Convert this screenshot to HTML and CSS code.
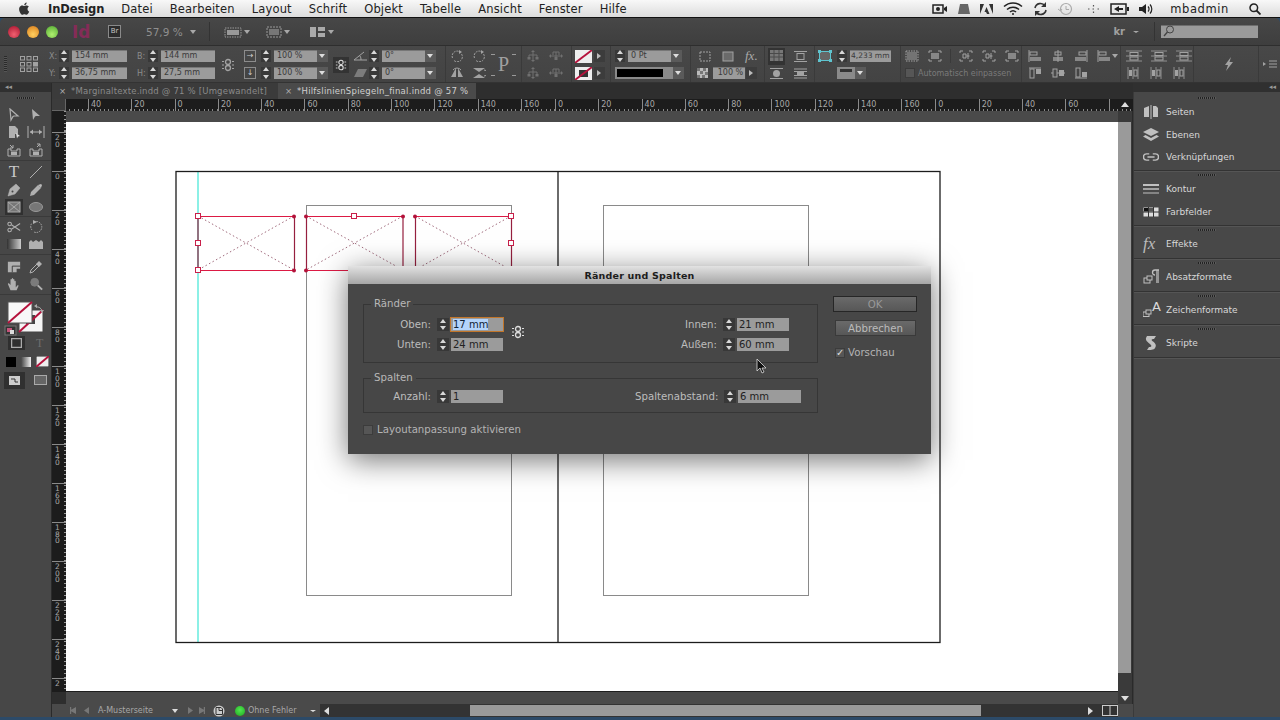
FILE: index.html
```html
<!DOCTYPE html>
<html lang="de">
<head>
    <meta charset="UTF-8">
    <title>InDesign - Ränder und Spalten</title>
    <link rel="stylesheet" href="styles.css">
</head>
<body>

<!-- icon set -->
<svg class="sprite" xmlns="http://www.w3.org/2000/svg">
    <symbol id="apple" viewBox="0 0 16 16"><path fill="currentColor" d="M11.2 8.5c0-1.6 1.3-2.3 1.4-2.4-.8-1.1-2-1.3-2.4-1.3-1-.1-2 .6-2.5.6s-1.3-.6-2.2-.6c-1.1 0-2.1.7-2.7 1.6-1.2 2-.3 5 .8 6.6.6.8 1.2 1.7 2.1 1.7.8 0 1.2-.5 2.2-.5s1.3.5 2.2.5 1.5-.8 2-1.6c.6-.9.9-1.8.9-1.9 0 0-1.8-.7-1.8-2.7zM9.6 3.6c.4-.5.8-1.3.7-2-.7 0-1.5.4-1.9 1-.4.5-.8 1.2-.7 1.9.7 0 1.4-.4 1.9-.9z"/></symbol>
    <symbol id="chain" viewBox="0 0 14 14"><rect x="4.5" y="1.5" width="5" height="5" rx="2.4" fill="none" stroke="currentColor" stroke-width="1.3"/><rect x="4.5" y="7.5" width="5" height="5" rx="2.4" fill="none" stroke="currentColor" stroke-width="1.3"/><path d="M1 3.5h2M1 7h2M1 10.5h2M11 3.5h2M11 7h2M11 10.5h2" stroke="currentColor"/></symbol>
    <symbol id="frame-pick" viewBox="0 0 14 12"><rect x="2" y="2" width="10" height="8" fill="currentColor" opacity=".5"/><path d="M1 1h12v10H1z" fill="none" stroke="currentColor" stroke-dasharray="1.5 1"/></symbol>
    <symbol id="frame-fit" viewBox="0 0 14 12"><rect x="3" y="3" width="8" height="6" fill="currentColor" opacity=".7"/><path d="M1 3V1h3M10 1h3v2M13 9v2h-3M4 11H1V9" fill="none" stroke="currentColor"/></symbol>
    <symbol id="frame-plus" viewBox="0 0 14 12"><path d="M1 3V1h3M10 1h3v2M13 9v2h-3M4 11H1V9" fill="none" stroke="currentColor"/><path d="M4 4h3v4H4zM9 3v6M7.5 6h3" fill="none" stroke="currentColor"/></symbol>
    <symbol id="tree" viewBox="0 0 14 12"><path d="M7 0l2 2H5zM7 12l2-2H5z" fill="currentColor"/><path d="M7 2v8M3 5h8M3 5v3M11 5v3" stroke="currentColor" fill="none"/><rect x="1.5" y="7" width="3" height="2.5" fill="currentColor"/><rect x="9.5" y="7" width="3" height="2.5" fill="currentColor"/></symbol>
    <symbol id="tree-side" viewBox="0 0 16 12"><path d="M1 6l2-2v4zM15 6l-2-2v4z" fill="currentColor"/><path d="M3 6h10M8 2v8M5 2h6M5 2v3M11 2v3" stroke="currentColor" fill="none"/><rect x="6.5" y="7" width="3" height="3" fill="currentColor"/></symbol>
    <symbol id="rot-a" viewBox="0 0 14 12"><path d="M2.5 8A5 5 0 0 1 10 2" fill="none" stroke="currentColor" stroke-dasharray="2 1"/><path d="M11.5 4A5 5 0 0 1 4 10.5" fill="none" stroke="currentColor" stroke-dasharray="2 1"/><path d="M9 0l3 2-3 2z" fill="currentColor"/></symbol>
    <symbol id="flip-h" viewBox="0 0 14 12"><path d="M6 1L1 10h5zM8 1l5 9H8z" fill="currentColor"/><path d="M3 3a5 5 0 0 1 8 0" fill="none" stroke="currentColor"/></symbol>
    <symbol id="flip-v" viewBox="0 0 14 12"><path d="M1 1h12L7 5zM1 11h12L7 7z" fill="currentColor"/><path d="M12 3a4 3 0 0 1 0 6" fill="none" stroke="currentColor"/></symbol>
    <symbol id="align-a" viewBox="0 0 14 12"><path d="M1 0v12" stroke="currentColor"/><rect x="2" y="2" width="7" height="3" fill="none" stroke="currentColor"/><rect x="2" y="7" width="11" height="4" fill="currentColor" opacity=".7"/></symbol>
    <symbol id="align-b" viewBox="0 0 14 12"><path d="M7 0v12" stroke="currentColor"/><rect x="4" y="2" width="6" height="3" fill="none" stroke="currentColor"/><rect x="2" y="7" width="10" height="4" fill="currentColor" opacity=".7"/></symbol>
    <symbol id="align-c" viewBox="0 0 14 12"><path d="M13 0v12" stroke="currentColor"/><rect x="5" y="2" width="7" height="3" fill="none" stroke="currentColor"/><rect x="1" y="7" width="11" height="4" fill="currentColor" opacity=".7"/></symbol>
    <symbol id="align-d" viewBox="0 0 14 12"><path d="M1 1h12" stroke="currentColor"/><rect x="2" y="2" width="4" height="9" fill="none" stroke="currentColor"/><rect x="8" y="2" width="5" height="5" fill="currentColor"/></symbol>
    <symbol id="align-e" viewBox="0 0 14 12"><path d="M0 6h14" stroke="currentColor"/><rect x="2" y="2" width="4" height="8" fill="#4a4a4a" stroke="currentColor"/><rect x="8" y="3" width="5" height="6" fill="currentColor"/></symbol>
    <symbol id="align-f" viewBox="0 0 14 12"><path d="M1 11h12" stroke="currentColor"/><rect x="2" y="1" width="4" height="9" fill="none" stroke="currentColor"/><rect x="8" y="5" width="5" height="5" fill="currentColor"/></symbol>
    <symbol id="dist-a" viewBox="0 0 16 12"><path d="M0 1h16M0 6h16M0 11h16" stroke="currentColor" stroke-width=".8"/><rect x="4" y="2.5" width="8" height="3" fill="none" stroke="currentColor"/><rect x="4" y="7" width="8" height="3" fill="none" stroke="currentColor"/></symbol>
    <symbol id="dist-b" viewBox="0 0 14 12"><path d="M2 0v12M7 0v12M12 0v12" stroke="currentColor" stroke-width=".8"/><rect x="3" y="3" width="3" height="6" fill="currentColor"/><rect x="8" y="3" width="3" height="6" fill="none" stroke="currentColor"/></symbol>
    <symbol id="select" viewBox="0 0 14 14"><path d="M3 1l8 7H7l-1 .5L4 12z" fill="none" stroke="currentColor" stroke-width="1.2"/></symbol>
    <symbol id="direct" viewBox="0 0 14 14"><path d="M3 1l8 7H7l-1 .5L4 12z" fill="currentColor"/></symbol>
    <symbol id="page-tool" viewBox="0 0 14 14"><path d="M2 1h6l3 3v5H8v4H2z" fill="currentColor"/><path d="M9 8l4 3-2 .5-1 2z" fill="#ddd"/></symbol>
    <symbol id="gap" viewBox="0 0 18 14"><path d="M1 1v12M17 1v12M3 7h12" stroke="currentColor" fill="none"/><path d="M3 7l3-2.500v5zM15 7l-3-2.500v5z" fill="currentColor"/></symbol>
    <symbol id="collect" viewBox="0 0 14 14"><path d="M1 6v7h12V6H10v2H4V6z" fill="none" stroke="currentColor"/><rect x="4" y="9" width="6" height="3" fill="currentColor"/><path d="M3 2l3 3M6 2v3H3" fill="none" stroke="currentColor"/></symbol>
    <symbol id="place" viewBox="0 0 14 14"><path d="M1 6v7h12V6H10v2H4V6z" fill="none" stroke="currentColor"/><rect x="4" y="9" width="6" height="3" fill="currentColor"/><path d="M11 1L8 4M8 1h3v3" fill="none" stroke="currentColor"/></symbol>
    <symbol id="pen" viewBox="0 0 14 14"><path d="M1 13l2-7 6-5 4 4-5 6zM1 13l4-4" fill="currentColor" stroke="currentColor" stroke-width=".5"/><circle cx="5.5" cy="8.5" r="1" fill="#444"/></symbol>
    <symbol id="pencil" viewBox="0 0 14 14"><path d="M1 13l1-4 7-7 3 3-7 7z" fill="currentColor"/><path d="M9 2l3-1 1 1-1 3z" fill="#b9b9b9"/></symbol>
    <symbol id="scissors" viewBox="0 0 16 14"><circle cx="3" cy="3.500" r="2" fill="none" stroke="currentColor" stroke-width="1.200"/><circle cx="3" cy="10.500" r="2" fill="none" stroke="currentColor" stroke-width="1.200"/><path d="M5 4.500L15 11M5 9.500L15 3" stroke="currentColor" stroke-width="1.200"/></symbol>
    <symbol id="free" viewBox="0 0 14 14"><path d="M3 10a5.500 5.500 0 0 1 0-7" fill="none" stroke="currentColor" stroke-dasharray="1.500 1"/><path d="M5 2a5.500 5.500 0 1 1 0 10" fill="none" stroke="currentColor" stroke-dasharray="1.500 1"/><path d="M4 0l4 2-4 2z" fill="currentColor"/></symbol>
    <symbol id="eyedrop" viewBox="0 0 14 14"><path d="M1 13l1-3 6-6 2 2-6 6z" fill="none" stroke="currentColor"/><path d="M7 4l3-3 3 3-3 3z" fill="currentColor"/></symbol>
    <symbol id="hand" viewBox="0 0 16 16"><path d="M4 15L1 8c0-1 1-1 1.500-.5L4 9V3c0-1 1.500-1 1.500 0v4-5c0-1 1.500-1 1.500 0v5-4c0-1 1.500-1 1.500 0v5-3c0-1 1.500-1 1.500 0v7l1.500-2c1-1 2-.5 1.500.5L11 15z" fill="currentColor"/></symbol>
    <symbol id="zoom" viewBox="0 0 16 16"><circle cx="6.500" cy="6" r="4.500" fill="currentColor" opacity=".5" stroke="currentColor"/><path d="M10 9.500l5 5" stroke="currentColor" stroke-width="2.200"/></symbol>
    <symbol id="note-tool" viewBox="0 0 16 14"><path d="M1 1h14v8h-4v4H1z" fill="currentColor"/><path d="M6 6h9M6 6v7" stroke="#333"/></symbol>
    <symbol id="layers" viewBox="0 0 16 14"><path d="M8 0l8 4-8 4-8-4z" fill="currentColor"/><path d="M2.500 7L0 8.500l8 4.500 8-4.500L13.500 7 8 10z" fill="currentColor"/></symbol>
    <symbol id="pages" viewBox="0 0 16 14"><path d="M8 0v14" stroke="currentColor"/><path d="M1 3l5-2v11H1zM10 1h3l2 2v9h-5z" fill="currentColor"/></symbol>
    <symbol id="links" viewBox="0 0 18 10"><path d="M7 1.500H4a3.500 3.500 0 0 0 0 7h3M11 1.500h3a3.500 3.500 0 0 1 0 7h-3M5 5h8" fill="none" stroke="currentColor" stroke-width="1.600"/></symbol>
    <symbol id="stroke" viewBox="0 0 16 10"><path d="M0 1h16" stroke="currentColor" stroke-width="2"/><path d="M0 5h16" stroke="currentColor" stroke-width="1.500"/><path d="M0 9h16" stroke="currentColor"/></symbol>
    <symbol id="swatches" viewBox="0 0 16 10"><rect x=".5" y=".5" width="15" height="9" fill="#ddd"/><rect x="1" y="1" width="4" height="3.500" fill="#111"/><rect x="6" y="1" width="4" height="3.500" fill="#555"/><path d="M5.500 0v10M10.500 0v10M0 5h16" stroke="#333"/></symbol>
    <symbol id="pstyle" viewBox="0 0 16 16"><rect x="1" y="9" width="6" height="5" fill="none" stroke="currentColor"/><rect x="4" y="7" width="5" height="4" fill="#484848" stroke="currentColor"/><path d="M12 1h4v13M14 1v13M12 1a2.500 2.500 0 0 0 0 5" fill="none" stroke="currentColor" stroke-width="1.300"/></symbol>
    <symbol id="cstyle" viewBox="0 0 16 16"><rect x="0" y="10" width="6" height="4.500" fill="none" stroke="currentColor"/><rect x="3" y="8" width="5" height="4" fill="#484848" stroke="currentColor"/></symbol>
    <symbol id="scripts" viewBox="0 0 14 16"><path d="M3 1h9L10 4c-3 0-3 1-1 2.500S13 10 11 13c-1 2-5 2-8 2l2-3c2 0 3-.5 2-2S1 6 2 3z" fill="currentColor"/></symbol>
    <symbol id="bolt" viewBox="0 0 10 14"><path d="M7 0L1 8h3l-2 6 7-9H5.500z" fill="currentColor"/></symbol>
    <symbol id="menu-lines" viewBox="0 0 14 8"><path d="M6 1h8M6 4h8M6 7h8" stroke="currentColor"/><path d="M0 2l3 2-3 2z" fill="currentColor"/></symbol>
    <symbol id="nine" viewBox="0 0 18 16"><g fill="none" stroke="currentColor"><rect x=".5" y=".5" width="4" height="3.500"/><rect x="7" y=".5" width="4" height="3.500"/><rect x="13.500" y=".5" width="4" height="3.500"/><rect x=".5" y="6.500" width="4" height="3.500"/><rect x="7" y="6.500" width="4" height="3.500"/><rect x=".5" y="12" width="4" height="3.500"/><rect x="7" y="12" width="4" height="3.500"/><rect x="13.500" y="12" width="4" height="3.500"/></g><rect x="13" y="6" width="5" height="4.500" fill="currentColor"/></symbol>
</svg>

<nav class="menubar">
    <svg class="apple"><use href="#apple"/></svg>
    <span class="menu-app">InDesign</span>
    <span>Datei</span>
    <span>Bearbeiten</span>
    <span>Layout</span>
    <span>Schrift</span>
    <span>Objekt</span>
    <span>Tabelle</span>
    <span>Ansicht</span>
    <span>Fenster</span>
    <span>Hilfe</span>
    <div class="menu-status">
        <svg width="16" height="12" viewBox="0 0 16 12"><rect x="1" y="2" width="10" height="8" fill="none" stroke="#222" stroke-width="1.500"/><circle cx="6" cy="6" r="2" fill="#222"/><path d="M12 5l3-2v6l-3-2z" fill="#222"/></svg>
        <svg width="12" height="12" viewBox="0 0 12 12"><path d="M2 1h8l2 10H0z" fill="#666"/></svg>
        <svg width="13" height="12" viewBox="0 0 13 12"><path d="M0 11V1h4zM13 11V1H9zM6.500 4L9.500 11H7L6 9H4.500z" fill="#333"/></svg>
        <svg class="wifi" width="20" height="13" viewBox="0 0 20 13"><path d="M1 4.500a13 13 0 0 1 18 0M4 7.500a9 9 0 0 1 12 0M7 10a4.500 4.500 0 0 1 6 0" fill="none" stroke="#222" stroke-width="1.500"/><circle cx="10" cy="12" r="1" fill="#222"/></svg>
        <svg width="15" height="14" viewBox="0 0 15 14"><path d="M2 6a5.500 5.500 0 0 1 10-2M13 8a5.500 5.500 0 0 1-10 2" fill="none" stroke="#333" stroke-width="1.600"/><path d="M13 0v5H8zM2 14V9h5z" fill="#333"/></svg>
        <svg width="15" height="14" viewBox="0 0 15 14"><circle cx="8" cy="7" r="5.500" fill="none" stroke="#aaa" stroke-width="1.200"/><path d="M8 4v3.500h3M0 7l2.500 2L4 7" fill="none" stroke="#aaa"/></svg>
        <svg class="dots" width="13" height="10" viewBox="0 0 13 10"><path d="M1 5h1.500M5.500 5H7M10.500 5H12M6.500 1v1.500M6.500 7.500V9" stroke="#555" stroke-width="1.200"/></svg>
        <svg width="19" height="12" viewBox="0 0 19 12"><rect x="1" y="1" width="15" height="10" fill="none" stroke="#222" stroke-width="1.500"/><path d="M17 4h2v4h-2z" fill="#222"/><path d="M4 6l5-3v2h4v2H9v2z" fill="#222"/></svg>
        <svg width="16" height="12" viewBox="0 0 16 12"><path d="M0 4h3l4-3v10L3 8H0z" fill="#222"/><path d="M9 3.500a3.500 3.500 0 0 1 0 5M11 1.500a6.500 6.500 0 0 1 0 9" fill="none" stroke="#222" stroke-width="1.200"/></svg>
        <span class="menu-user">mbadmin</span>
        <svg class="menu-search" width="12" height="12" viewBox="0 0 12 12"><circle cx="4.800" cy="4.800" r="3.800" fill="none" stroke="#222" stroke-width="1.500"/><path d="M7.500 7.500l4 4" stroke="#222" stroke-width="1.800"/></svg>
    </div>
</nav>

<header class="appbar">
    <div class="lights"><i class="light red"></i><i class="light amber"></i><i class="light green"></i></div>
    <span class="app-id">Id</span>
    <span class="app-br">Br</span>
    <span class="app-zoom">57,9 %</span><i class="caret"></i>
    <i class="app-sep"></i>
    <svg class="app-icon" width="18" height="12" viewBox="0 0 18 12"><path d="M1 2h16v9H1z" fill="none" stroke="#999" stroke-dasharray="1.500 1"/><rect x="3" y="4" width="12" height="5" fill="#999"/></svg><i class="caret"></i>
    <svg class="app-icon" width="16" height="12" viewBox="0 0 16 12"><path d="M1 1h14v10H1z" fill="none" stroke="#999" stroke-dasharray="2 1"/><rect x="3" y="3" width="10" height="6" fill="#777"/></svg><i class="caret"></i>
    <svg class="app-icon app-icon-last" width="17" height="12" viewBox="0 0 17 12"><rect x="1" y="1" width="6" height="10" fill="#aaa"/><rect x="9" y="1" width="7" height="4" fill="#aaa"/><rect x="9" y="7" width="7" height="4" fill="#aaa"/></svg><i class="caret"></i>
    <span class="app-kr">kr</span><i class="caret caret-small"></i>
    <i class="app-sep app-sep-right"></i>
    <div class="app-search"><svg width="12" height="12" viewBox="0 0 12 12"><circle cx="7" cy="4.500" r="3.500" fill="none" stroke="#444"/><path d="M4.500 7L1 11" stroke="#444" stroke-width="1.300"/></svg></div>
</header>

<section class="options">
    <div class="g g-ref"><i class="grip-v"></i><svg class="ic" width="18" height="16"><use href="#nine"/></svg></div>
    <div class="g g-pos">
        <div class="row"><label>X:</label><i class="spin"></i><span class="field w55">154 mm</span></div>
        <div class="row"><label>Y:</label><i class="spin"></i><span class="field w55">36,75 mm</span></div>
    </div>
    <div class="g g-size">
        <div class="row"><label>B:</label><i class="spin"></i><span class="field w54">144 mm</span></div>
        <div class="row"><label>H:</label><i class="spin"></i><span class="field w54">27,5 mm</span></div>
    </div>
    <div class="g g-link"><svg class="ic" width="14" height="14"><use href="#chain"/></svg></div>
    <div class="g g-scale">
        <div class="row"><span class="boxed">→</span><i class="spin"></i><span class="field w43">100 %</span><i class="dd"></i></div>
        <div class="row"><span class="boxed">↓</span><i class="spin"></i><span class="field w43">100 %</span><i class="dd"></i></div>
    </div>
    <div class="g g-chain"><span class="chain-box"><svg width="12" height="14" class="ic-light"><use href="#chain"/></svg></span></div>
    <div class="g g-angle sep">
        <div class="row"><svg class="ic" width="13" height="10" viewBox="0 0 13 10"><path d="M0 9h13M0 9L10 1M7 9a6 6 0 0 0-1-4" fill="none" stroke="currentColor"/></svg><i class="spin"></i><span class="field w43">0°</span><i class="dd"></i></div>
        <div class="row"><svg class="ic" width="13" height="10" viewBox="0 0 13 10"><path d="M4 1h9L9 9H0z" fill="currentColor" opacity=".6"/></svg><i class="spin"></i><span class="field w43">0°</span><i class="dd"></i></div>
    </div>
    <div class="g g-flip sep">
        <div class="flip-icons">
            <svg class="ic" width="14" height="12"><use href="#rot-a"/></svg>
            <svg class="ic" width="14" height="12"><use href="#rot-a"/></svg>
            <svg class="ic" width="14" height="12"><use href="#flip-h"/></svg>
            <svg class="ic" width="14" height="12"><use href="#flip-v"/></svg>
        </div>
        <span class="p-mark">P</span>
    </div>
    <div class="g g-dist sep dim">
        <div class="row"><svg class="ic" width="14" height="12"><use href="#tree"/></svg><svg class="ic" width="16" height="12"><use href="#tree-side"/></svg></div>
        <div class="row"><svg class="ic" width="14" height="12"><use href="#tree"/></svg><svg class="ic" width="16" height="12"><use href="#tree-side"/></svg></div>
    </div>
    <div class="g g-swatch sep">
        <div class="row"><svg width="17" height="13" viewBox="0 0 17 13"><rect width="17" height="13" fill="#eee"/><path d="M0 13L17 0" stroke="#b5123c" stroke-width="1.800"/></svg><i class="play"></i></div>
        <div class="row"><svg width="17" height="13" viewBox="0 0 17 13"><rect width="17" height="13" fill="#eee"/><rect x="4" y="3" width="9" height="7" fill="#333"/><path d="M0 13L17 0" stroke="#b5123c" stroke-width="1.800"/></svg><i class="play"></i></div>
    </div>
    <div class="g g-stroke sep">
        <div class="row"><i class="spin"></i><span class="field w43">0 Pt</span><i class="dd"></i></div>
        <div class="row"><span class="stroke-style"><b></b></span><i class="dd"></i></div>
    </div>
    <div class="g g-effects sep">
        <div class="row eff-top">
            <svg class="ic" width="12" height="11" viewBox="0 0 12 11"><path d="M1 1h10v9H1z" fill="none" stroke="currentColor" stroke-dasharray="2 1"/></svg>
            <svg class="ic" width="12" height="11" viewBox="0 0 12 11"><rect x="1" y="1" width="10" height="9" fill="#6a6a6a" stroke="currentColor"/></svg>
            <span class="fx-mini">fx.</span>
        </div>
        <div class="row eff-bot">
            <svg width="11" height="10" viewBox="0 0 11 10"><rect width="11" height="10" fill="#bbb"/><path d="M0 0h3v3H0zM6 0h3v3H6zM3 3h3v3H3zM8 4h3v3H8zM0 7h3v3H0zM5 7h3v3H5z" fill="#777"/></svg>
            <span class="field w32 center">100 %</span><i class="play"></i>
        </div>
    </div>
    <div class="g g-wrap sep">
        <div class="row"><span class="wrap-on"><svg width="13" height="11" viewBox="0 0 13 11"><rect width="13" height="11" fill="#777"/><path d="M0 3.500h13M0 7h13M4 0v11M9 0v11" stroke="#4a4a4a"/></svg></span><svg class="ic" width="13" height="11" viewBox="0 0 13 11"><path d="M0 .5h13M0 10.500h13" stroke="currentColor"/><rect x="3" y="2.500" width="7" height="6" fill="none" stroke="currentColor"/></svg></div>
        <div class="row"><svg class="ic wrap-b" width="13" height="11" viewBox="0 0 13 11"><circle cx="6.500" cy="5.500" r="3.500" fill="currentColor"/><path d="M0 .5h13M0 10.500h13" stroke="currentColor"/></svg><svg class="ic" width="13" height="11" viewBox="0 0 13 11"><path d="M0 1h13M0 3.500h13M0 7.500h13M0 10h13" stroke="currentColor"/><rect x="3" y="4" width="7" height="3" fill="currentColor"/></svg></div>
    </div>
    <div class="g g-fitsize sep">
        <div class="row"><svg width="14" height="12" viewBox="0 0 14 12"><rect x="1.500" y="1.500" width="11" height="9" fill="#666" stroke="#5fc4cf"/><path d="M0 0h3v3H0zM11 0h3v3h-3zM0 9h3v3H0zM11 9h3v3h-3z" fill="#5fc4cf"/></svg><i class="spin spin-gap"></i><span class="field w41">4,233 mm</span></div>
        <div class="row"><i class="row-pad"></i><span class="corner-pick"><b></b></span><i class="dd"></i></div>
    </div>
    <div class="g g-fit sep">
        <div class="row fit-top">
            <svg class="ic" width="14" height="12"><use href="#frame-pick"/></svg>
            <svg class="ic" width="14" height="12"><use href="#frame-fit"/></svg>
            <i class="inner-sep"></i>
            <svg class="ic" width="14" height="12"><use href="#frame-plus"/></svg>
            <svg class="ic" width="14" height="12"><use href="#frame-plus"/></svg>
            <svg class="ic" width="14" height="12"><use href="#frame-fit"/></svg>
        </div>
        <div class="row fit-bot"><i class="check-box"></i><span class="fit-label">Automatisch einpassen</span></div>
    </div>
    <div class="g g-align sep">
        <div class="row align-row">
            <svg class="ic" width="14" height="12"><use href="#align-a"/></svg>
            <svg class="ic" width="14" height="12"><use href="#align-b"/></svg>
            <svg class="ic" width="14" height="12"><use href="#align-c"/></svg>
            <svg class="ic" width="14" height="12"><use href="#align-a"/></svg><i class="caret caret-tiny"></i>
        </div>
        <div class="row align-row">
            <svg class="ic" width="14" height="12"><use href="#align-d"/></svg>
            <svg class="ic" width="14" height="12"><use href="#align-e"/></svg>
            <svg class="ic" width="14" height="12"><use href="#align-f"/></svg>
        </div>
    </div>
    <div class="g g-distrib sep">
        <div class="row distrib-row">
            <svg class="ic" width="16" height="12"><use href="#dist-a"/></svg>
            <svg class="ic" width="16" height="12"><use href="#dist-a"/></svg>
            <svg class="ic" width="16" height="12"><use href="#dist-a"/></svg>
        </div>
        <div class="row distrib-row">
            <svg class="ic" width="14" height="12"><use href="#dist-b"/></svg>
            <svg class="ic" width="14" height="12"><use href="#dist-b"/></svg>
            <svg class="ic" width="14" height="12"><use href="#dist-b"/></svg>
        </div>
    </div>
    <div class="g g-bolt sep"><svg class="ic" width="10" height="14"><use href="#bolt"/></svg></div>
    <div class="g g-end"><svg class="ic" width="14" height="8"><use href="#menu-lines"/></svg></div>
</section>

<div class="workspace">
    <aside class="tools-col">
        <div class="collapse-strip"><span class="collapse">◂◂</span></div>
        <div class="tools">
            <i class="grip-h"></i>
            <div class="tool-group tg-select">
                <svg><use href="#select"/></svg><svg><use href="#direct"/></svg>
                <svg><use href="#page-tool"/></svg><svg class="wide"><use href="#gap"/></svg>
                <svg><use href="#collect"/></svg><svg><use href="#place"/></svg>
            </div>
            <div class="tool-group tg-draw">
                <span class="tool-t">T</span><svg viewBox="0 0 14 14"><path d="M1 13L13 1" stroke="currentColor"/></svg>
                <svg><use href="#pen"/></svg><svg><use href="#pencil"/></svg>
                <span class="tool-on"><svg viewBox="0 0 14 14"><rect x="1" y="2" width="12" height="10" fill="#777" stroke="#aaa"/><path d="M1 2l12 10M13 2L1 12" stroke="#aaa"/></svg></span><svg viewBox="0 0 14 14"><ellipse cx="7" cy="7" rx="6.500" ry="4.500" fill="#777" stroke="#999"/></svg>
            </div>
            <div class="tool-group tg-cut">
                <svg><use href="#scissors"/></svg><svg><use href="#free"/></svg>
                <svg viewBox="0 0 14 14"><defs><linearGradient id="tg"><stop offset="0" stop-color="#333"/><stop offset="1" stop-color="#ccc"/></linearGradient></defs><rect y="2" width="14" height="10" fill="url(#tg)"/></svg><svg viewBox="0 0 14 14"><path d="M0 5l2-2 2 2 3-2 3 2 2-2 2 2v7H0z" fill="currentColor"/></svg>
            </div>
            <div class="tool-group">
                <svg><use href="#note-tool"/></svg><svg><use href="#eyedrop"/></svg>
                <svg><use href="#hand"/></svg><svg><use href="#zoom"/></svg>
            </div>
            <svg class="fillstroke" width="50" height="35" viewBox="0 0 50 35">
                <rect x="19" y="9" width="24" height="22" fill="#f4f4f4" stroke="#444"/>
                <rect x="26" y="14" width="9" height="9" fill="#444"/>
                <path d="M19 31L43 9" stroke="#b5123c" stroke-width="2"/>
                <rect x="8" y="1" width="24" height="21" fill="#f8f8f8" stroke="#555"/>
                <path d="M8 22L32 1" stroke="#b5123c" stroke-width="2"/>
                <path d="M36 6a5 5 0 0 1 6 4" fill="none" stroke="#aaa"/>
                <path d="M34 5l3-2v4zM40 9h4l-2 3z" fill="#aaa"/>
                <rect x="5" y="25" width="11" height="9" fill="#333" stroke="#777"/>
                <rect x="7" y="27" width="5" height="4" fill="#c4537a"/>
                <rect x="10" y="29" width="4" height="4" fill="#ddd"/>
            </svg>
            <div class="fmt-row">
                <span class="fmt-on"><svg width="11" height="10" viewBox="0 0 11 10"><rect x=".5" y=".5" width="10" height="9" fill="none" stroke="#aaa" stroke-width="1.500"/></svg></span>
                <span class="fmt-t">T</span>
            </div>
            <div class="apply-row">
                <i class="apply-black"></i><i class="apply-grad"></i>
                <svg width="13" height="11" viewBox="0 0 13 11"><rect width="13" height="11" fill="#eee" stroke="#222"/><path d="M0 11L13 0" stroke="#b5123c" stroke-width="2"/></svg>
            </div>
            <div class="mode-row">
                <span class="mode-on"><svg width="11" height="9" viewBox="0 0 11 9"><rect width="11" height="9" fill="#ccc"/><path d="M2 3h4v3h3" fill="none" stroke="#333"/></svg></span>
                <svg width="13" height="10" viewBox="0 0 13 10"><rect x=".5" y=".5" width="12" height="9" fill="#666" stroke="#aaa"/></svg>
            </div>
        </div>
    </aside>

    <main class="doc">
        <div class="tabs">
            <div class="tab"><span class="tab-x">×</span>*Marginaltexte.indd @ 71 % [Umgewandelt]</div>
            <div class="tab tab-active"><span class="tab-x">×</span>*HilfslinienSpiegeln_final.indd @ 57 %</div>
        </div>
        <div class="hruler">
            <i class="ruler-corner"></i>
            <span class="t-lead"></span>
            <span>40</span><span>20</span><span>0</span><span>20</span><span>40</span><span>60</span><span>80</span><span>100</span><span>120</span><span>140</span><span class="short">160</span>
            <span>0</span><span>20</span><span>40</span><span>60</span><span>80</span><span>100</span><span>120</span><span>140</span><span class="short">160</span>
            <span>0</span><span>20</span><span>40</span><span>60</span><span class="last"></span>
        </div>
        <div class="view">
            <div class="vruler">
                <span>20</span><span>0</span><span>20</span><span>40</span><span>60</span><span>80</span><span>100</span><span>120</span><span>140</span><span>160</span><span>180</span><span>200</span><span>220</span><span>240</span><span>2</span>
            </div>
            <div class="canvas">
                <div class="page">
                    <svg class="spread" width="1052" height="570" viewBox="66 122 1052 570">
                        <rect x="306.500" y="205.500" width="205" height="390" fill="none" stroke="#8a8a8a"/>
                        <rect x="603.500" y="205.500" width="205" height="390" fill="none" stroke="#8a8a8a"/>
                        <path d="M198 172V642" stroke="#8cf0e6" stroke-width="2"/>
                        <rect x="176" y="171.500" width="764" height="471" fill="none" stroke="#1c1c1c" stroke-width="1.300"/>
                        <path d="M558 171V642" stroke="#1c1c1c" stroke-width="1.300"/>
                        <g stroke="#a06a7c" stroke-dasharray="1.500 2.500" fill="none">
                            <path d="M198 216L294 270M294 216L198 270"/>
                            <path d="M306 216L403 270M403 216L306 270"/>
                            <path d="M415 216L511 270M511 216L415 270"/>
                        </g>
                        <path d="M198 216.500H294M306 216.500H403M415 216.500H511M198 270.500H294M306 270.500H403M415 270.500H511" stroke="#dc1a44" stroke-width="1.200"/>
                        <path d="M198 216V270M294.500 216V270M306.500 216V270M403 216V270M415.500 216V270M511.500 216V270" stroke="#96203f" stroke-width="1.200"/>
                        <g fill="#b3123a">
                            <circle cx="294" cy="216.500" r="2"/><circle cx="294" cy="270.500" r="2"/>
                            <circle cx="306" cy="216.500" r="2"/><circle cx="306" cy="270.500" r="2"/>
                            <circle cx="403" cy="216.500" r="2"/><circle cx="415" cy="216.500" r="2"/>
                        </g>
                        <g fill="#fff" stroke="#c8204a">
                            <rect x="195.500" y="213.500" width="5" height="5"/><rect x="195.500" y="240.500" width="5" height="5"/><rect x="195.500" y="267.500" width="5" height="5"/>
                            <rect x="351.500" y="213.500" width="5" height="5"/>
                            <rect x="508.500" y="213.500" width="5" height="5"/><rect x="508.500" y="240.500" width="5" height="5"/>
                        </g>
                    </svg>
                </div>
            </div>
            <div class="vscroll">
                <i class="arrow-up"></i>
                <div class="vthumb"></div>
                <i class="arrow-down"></i>
            </div>
        </div>
        <footer class="statusbar">
            <div class="status-left">
                <i class="nav nav-first"></i><i class="nav nav-prev"></i>
                <span class="status-page">A-Musterseite</span><i class="caret"></i>
                <i class="nav nav-next"></i><i class="nav nav-last"></i>
                <svg class="status-doc" width="12" height="12" viewBox="0 0 12 12"><circle cx="6" cy="6" r="5.500" fill="#ccc"/><path d="M3 2.500h5l1.500 1.500v5.500H3zM6 2.500v3h3.500" fill="none" stroke="#333"/></svg>
                <i class="status-dot"></i>
                <span class="status-err">Ohne Fehler</span><i class="caret caret-small"></i>
            </div>
            <div class="hscroll">
                <i class="arrow-left"></i>
                <div class="hthumb"></div>
                <i class="arrow-right"></i>
                <svg class="spread-icon" width="16" height="11" viewBox="0 0 16 11"><rect x=".5" y=".5" width="15" height="10" fill="none" stroke="#ccc"/><path d="M8 0v11" stroke="#ccc"/></svg>
                <i class="scroll-corner"></i>
            </div>
        </footer>
    </main>

    <aside class="panels-col">
        <div class="collapse-strip strip-right"><span class="collapse">◂◂</span></div>
        <div class="panels">
            <section class="panel panel-first">
                <i class="grip-h"></i>
                <div class="panel-item"><svg width="16" height="14"><use href="#pages"/></svg>Seiten</div>
                <div class="panel-item"><svg width="16" height="14"><use href="#layers"/></svg>Ebenen</div>
                <div class="panel-item"><svg width="16" height="10"><use href="#links"/></svg>Verknüpfungen</div>
            </section>
            <section class="panel panel-second">
                <i class="grip-h"></i>
                <div class="panel-item"><svg width="16" height="10"><use href="#stroke"/></svg>Kontur</div>
                <div class="panel-item"><svg width="16" height="10"><use href="#swatches"/></svg>Farbfelder</div>
            </section>
            <section class="panel">
                <i class="grip-h"></i>
                <div class="panel-item"><span class="panel-fx">fx</span>Effekte</div>
            </section>
            <section class="panel">
                <i class="grip-h"></i>
                <div class="panel-item"><svg width="16" height="16"><use href="#pstyle"/></svg>Absatzformate</div>
            </section>
            <section class="panel">
                <i class="grip-h"></i>
                <div class="panel-item"><span class="panel-a"><svg width="16" height="16"><use href="#cstyle"/></svg><b>A</b></span>Zeichenformate</div>
            </section>
            <section class="panel">
                <i class="grip-h"></i>
                <div class="panel-item"><svg width="16" height="16"><use href="#scripts"/></svg>Skripte</div>
            </section>
        </div>
    </aside>
</div>
<div class="desktop-edge"></div>

<!-- dialog over the document -->
<div class="dialog">
    <div class="dialog-title">Ränder und Spalten</div>
    <div class="dialog-body">
        <div class="dialog-main">
            <fieldset class="dlg-group">
                <legend>Ränder</legend>
                <div class="dlg-col">
                    <div class="dlg-field"><label>Oben:</label><i class="spin spin-big"></i><span class="dlg-input focused"><em>17 mm</em></span></div>
                    <div class="dlg-field"><label>Unten:</label><i class="spin spin-big"></i><span class="dlg-input">24 mm</span></div>
                    <svg class="dlg-chain" width="14" height="14"><use href="#chain"/></svg>
                </div>
                <div class="dlg-col dlg-right">
                    <div class="dlg-field"><label>Innen:</label><i class="spin spin-big"></i><span class="dlg-input">21 mm</span></div>
                    <div class="dlg-field"><label>Außen:</label><i class="spin spin-big"></i><span class="dlg-input">60 mm</span></div>
                </div>
            </fieldset>
            <fieldset class="dlg-group dlg-group-cols">
                <legend>Spalten</legend>
                <div class="dlg-col">
                    <div class="dlg-field"><label>Anzahl:</label><i class="spin spin-big"></i><span class="dlg-input">1</span></div>
                </div>
                <div class="dlg-col dlg-right dlg-right-wide">
                    <div class="dlg-field"><label>Spaltenabstand:</label><i class="spin spin-big"></i><span class="dlg-input wide">6 mm</span></div>
                </div>
            </fieldset>
            <div class="dlg-check"><i class="check-box"></i>Layoutanpassung aktivieren</div>
        </div>
        <div class="dialog-side">
            <button class="btn btn-default">OK</button>
            <button class="btn">Abbrechen</button>
            <div class="dlg-preview"><i class="check-box checked">✓</i>Vorschau</div>
        </div>
    </div>
</div>

<svg class="cursor" width="12" height="16" viewBox="0 0 12 16"><path d="M1 1v12l3-3 2 5 2-1-2-4h4z" fill="#111" stroke="#ddd" stroke-width=".8"/></svg>

</body>
</html>
```

FILE: styles.css
```css
* {
    box-sizing: border-box;
}
html, body {
    margin: 0;
    height: 720px;
    overflow: hidden;
}
body {
    position: relative;
    width: 1280px;
    background-color: #2c4a68;
    font-family: "DejaVu Sans", "Liberation Sans", sans-serif;
    color: #c4c4c4;
}
i {
    font-style: normal;
    display: block;
}
.sprite {
    position: absolute;
    width: 0;
    height: 0;
}

/* mac menu bar */
.menubar {
    height: 18px;
    display: flex;
    align-items: center;
    gap: 17px;
    padding-left: 17px;
    background: linear-gradient(#f8f8f8, #dcdcdc);
    border-bottom: 1px solid #111;
    font-size: 11.5px;
    letter-spacing: .17px;
    color: #222;
}
.apple {
    width: 15px;
    height: 15px;
    margin-right: -1px;
    color: #333;
}
.menu-app {
    font-weight: bold;
    letter-spacing: -.1px;
}
.menu-status {
    margin-left: auto;
    display: flex;
    align-items: center;
    gap: 10px;
    padding-right: 19px;
}
.menu-status .dots {
    margin-left: 4px;
}
.menu-user {
    margin-left: 5px;
    letter-spacing: .6px;
}
.menu-search {
    margin-left: 10px;
}

/* application bar */
.appbar {
    height: 28px;
    display: flex;
    align-items: center;
    padding-left: 8px;
    background: linear-gradient(#474747, #3e3e3e);
    border-radius: 5px 5px 0 0;
    border-bottom: 1px solid #2e2e2e;
}
.lights {
    display: flex;
    gap: 7px;
}
.light {
    width: 12px;
    height: 12px;
    border-radius: 50%;
}
.red { background: radial-gradient(circle at 50% 70%, #f06070, #a8102c); }
.amber { background: radial-gradient(circle at 50% 70%, #ffd060, #d97a18); }
.green { background: radial-gradient(circle at 50% 70%, #b0f070, #50a830); }
.app-id {
    margin-left: 14px;
    width: 24px;
    font-size: 17px;
    font-weight: bold;
    color: #842c58;
}
.app-br {
    margin-left: 12px;
    width: 13px;
    height: 13px;
    border: 1px solid #8a8a8a;
    background: #2c2c2c;
    font-size: 7px;
    line-height: 11px;
    text-align: center;
}
.app-zoom {
    margin-left: 25px;
    font-size: 10.5px;
    color: #8f8f8f;
}
.caret {
    width: 0;
    height: 0;
    margin-left: 4px;
    border: 3px solid transparent;
    border-top: 4px solid #a8a8a8;
    border-bottom: 0;
}
.appbar > .caret {
    margin-left: 2px;
}
.appbar > .app-zoom + .caret {
    margin-left: 7px;
}
.app-sep {
    width: 1px;
    height: 19px;
    margin: 0 14px 0 13px;
    background: #333;
}
.app-icon + .caret + .app-icon {
    margin-left: 16px;
}
.app-icon + .caret + .app-icon-last {
    margin-left: 19px;
}
.app-kr {
    margin-left: auto;
    font-size: 10px;
    font-weight: bold;
    color: #a0a0a0;
}
.appbar > .caret-small {
    margin-left: 8px;
    border-width: 2px 3px 0;
}
.appbar > .app-sep-right {
    margin: 0 6px 0 15px;
}
.app-search {
    width: 97px;
    height: 13px;
    margin-right: 22px;
    background: #9a9a9a;
    box-shadow: inset 0 1px 0 #6e6e6e;
    padding-left: 2px;
}
.app-search svg {
    display: block;
}

/* options bar */
.options {
    height: 37px;
    display: flex;
    background: linear-gradient(#484848, #434343);
    border-bottom: 1px solid #333;
    font-size: 8px;
}
.g {
    flex: none;
    display: flex;
    flex-direction: column;
    justify-content: space-between;
    padding: 4px 0 3px;
    color: #8c8c8c;
}
.sep {
    border-right: 1px solid #3a3a3a;
}
.row {
    display: flex;
    align-items: center;
    height: 12px;
}
.row label {
    flex: none;
    color: #8c8c8c;
    font-size: 8px;
}
.ic {
    flex: none;
    display: block;
    color: #a2a2a2;
}
.ic-light {
    display: block;
    color: #ddd;
}
.spin {
    flex: none;
    position: relative;
    width: 10px;
    height: 12px;
    background: #383838;
}
.spin::before, .spin::after {
    content: "";
    position: absolute;
    left: 2px;
    border: 3px solid transparent;
}
.spin::before {
    top: 0;
    border-bottom: 4px solid #d8d8d8;
    border-top: 0;
}
.spin::after {
    bottom: 0;
    border-top: 4px solid #d8d8d8;
    border-bottom: 0;
}
.field {
    flex: none;
    height: 12px;
    margin-left: 3px;
    padding-left: 3px;
    background: #9b9b9b;
    box-shadow: inset 0 1px 0 #777;
    color: #3a3a3a;
    line-height: 12px;
    white-space: nowrap;
    overflow: hidden;
}
.w55 { width: 55px; }
.w54 { width: 54px; }
.w43 { width: 43px; }
.w41 { width: 41px; padding-left: 1px; font-size: 7.5px; }
.w32 { width: 32px; }
.center { text-align: center; margin-left: 5px; }
.dd {
    flex: none;
    position: relative;
    width: 11px;
    height: 12px;
    background: #5a5a5a;
}
.dd::before, .play::before {
    content: "";
    position: absolute;
    border: 3px solid transparent;
}
.dd::before {
    left: 2px;
    top: 4px;
    border-top: 4px solid #ddd;
    border-bottom: 0;
}
.play {
    flex: none;
    position: relative;
    width: 11px;
    height: 12px;
    margin-left: 1px;
    background: #3c3c3c;
}
.play::before {
    left: 3px;
    top: 3px;
    border-left: 4px solid #bbb;
    border-right: 0;
}
.g-ref {
    width: 44px;
    flex-direction: row;
    justify-content: flex-start;
    align-items: center;
    padding: 0 0 0 4px;
}
.g-ref .ic {
    margin-left: 13px;
}
.grip-v {
    width: 3px;
    height: 16px;
    background: repeating-linear-gradient(#2a2a2a 0 1px, #555 1px 2px);
}
.g-pos { width: 88px; padding-left: 5px; }
.g-pos label { width: 10px; }
.g-size { width: 86px; padding-left: 5px; }
.g-size label { width: 11px; }
.g-link {
    width: 20px;
    align-items: center;
    justify-content: center;
}
.g-scale { width: 94px; padding-left: 6px; }
.boxed {
    flex: none;
    width: 12px;
    height: 12px;
    margin-right: 5px;
    border: 1px solid #8c8c8c;
    font-size: 8px;
    line-height: 9px;
    color: #ccc;
    text-align: center;
}
.g-chain {
    width: 18px;
    justify-content: center;
    align-items: center;
}
.chain-box {
    width: 16px;
    height: 16px;
    padding: 1px 2px;
    background: #333;
}
.g-angle { width: 96px; padding-left: 4px; }
.g-angle .spin { margin-left: 2px; }
.g-flip {
    width: 76px;
    flex-direction: row;
    align-items: center;
    justify-content: flex-start;
    padding: 0 0 0 4px;
}
.flip-icons {
    display: grid;
    grid-template-columns: 14px 14px;
    column-gap: 8px;
    row-gap: 5px;
}
.p-mark {
    margin-left: 5px;
    width: 25px;
    height: 27px;
    line-height: 27px;
    text-align: center;
    font-family: "Liberation Serif", serif;
    font-size: 20px;
    color: #a0a0a0;
    background:
        linear-gradient(#999, #999) 0 3px / 4px 1px no-repeat,
        linear-gradient(#999, #999) 21px 3px / 4px 1px no-repeat,
        linear-gradient(#999, #999) 0 24px / 4px 1px no-repeat,
        linear-gradient(#999, #999) 21px 24px / 4px 1px no-repeat;
}
.g-dist { width: 50px; padding-left: 4px; }
.g-dist .row { gap: 8px; }
.dim .ic { color: #707070; }
.g-swatch { width: 39px; padding-left: 3px; }
.g-swatch .row { gap: 1px; }
.g-stroke { width: 80px; padding-left: 4px; }
.stroke-style {
    flex: none;
    width: 58px;
    height: 12px;
    padding: 2px 10px 2px 2px;
    background: #8a8a8a;
}
.stroke-style b {
    display: block;
    height: 8px;
    background: #000;
}
.g-effects { width: 74px; padding-left: 6px; }
.eff-top { gap: 11px; padding-left: 2px; }
.fx-mini {
    font-family: "Liberation Serif", serif;
    font-style: italic;
    font-size: 13px;
    color: #aaa;
}
.g-wrap { width: 50px; padding-left: 3px; }
.g-wrap .row { gap: 9px; }
.wrap-on {
    display: block;
    margin: -2px 0 -2px 0;
    padding: 2px 2px;
    background: #333;
}
.wrap-b { margin: 0 2px; }
.g-fitsize { width: 86px; padding-left: 3px; }
.spin-gap { margin-left: 5px; }
.row-pad { width: 19px; }
.corner-pick {
    width: 18px;
    height: 12px;
    background: #8a8a8a;
    padding: 2px 3px;
}
.corner-pick b {
    display: block;
    height: 3px;
    background: #333;
}
.g-fit { width: 121px; padding-left: 4px; }
.fit-top { gap: 9px; }
.inner-sep { width: 1px; height: 14px; background: #3a3a3a; margin: 0 -1px; }
.check-box {
    flex: none;
    width: 10px;
    height: 10px;
    background: #565656;
    border: 1px solid #3c3c3c;
}
.fit-label {
    margin-left: 3px;
    color: #7a7a7a;
    white-space: nowrap;
}
.g-align { width: 99px; padding-left: 6px; }
.align-row { gap: 9px; }
.caret-tiny { margin-left: -8px; align-self: center; }
.g-distrib { width: 73px; padding-left: 4px; }
.distrib-row { gap: 7px; }
.g-distrib .ic { margin: 0 1px; }
.g-bolt {
    width: 65px;
    justify-content: center;
    align-items: center;
    padding: 0 0 0 6px;
}
.g-end {
    flex: 1;
    align-items: center;
    justify-content: center;
    padding: 0;
}

/* main work area */
.workspace {
    height: 634px;
    display: flex;
    background: #2e2e2e;
}
.tools-col {
    width: 52px;
    flex: none;
    display: flex;
    flex-direction: column;
    border-right: 1px solid #2a2a2a;
}
.collapse-strip {
    height: 9px;
    background: #303030;
    font-size: 7px;
    line-height: 8px;
    color: #999;
    padding-left: 5px;
}
.strip-right {
    text-align: right;
    padding: 0 4px 0 0;
}
.tools {
    flex: 1;
    background: #474747;
    padding-top: 5px;
}
.grip-h {
    display: block;
    width: 18px;
    height: 2px;
    margin: 0 auto;
    background: repeating-linear-gradient(90deg, #222 0 1px, #5a5a5a 1px 2px);
}
.tool-group {
    display: grid;
    grid-template-columns: 22px 22px;
    grid-auto-rows: 17.5px;
    justify-items: center;
    align-items: center;
    padding: 3px 0 1px 3px;
    border-bottom: 1px solid #3a3a3a;
    color: #b0b0b0;
}
.tool-group svg {
    display: block;
    width: 14px;
    height: 14px;
}
.tool-group svg.wide {
    width: 18px;
}
.tg-select {
    padding-top: 7px;
}
.tg-draw {
    padding-bottom: 0;
}
.tg-cut {
    padding-top: 1px;
}
.tool-t {
    font-family: "Liberation Serif", serif;
    font-size: 17px;
    line-height: 16px;
    color: #c8c8c8;
}
.tool-on {
    display: block;
    padding: 1px 2px;
    background: #303030;
}
.fillstroke {
    display: block;
    margin-top: 6px;
}
.fmt-row, .apply-row, .mode-row {
    display: flex;
    align-items: center;
}
.fmt-row {
    height: 14px;
    padding-left: 8px;
    gap: 11px;
}
.fmt-on {
    display: block;
    padding: 2px 3px;
    background: #2f2f2f;
    line-height: 0;
}
.fmt-t {
    font-family: "Liberation Serif", serif;
    font-size: 12px;
    color: #6e6e6e;
}
.apply-row {
    height: 13px;
    margin-top: 5px;
    padding-left: 6px;
    gap: 5px;
}
.apply-black {
    width: 10px;
    height: 10px;
    background: #000;
}
.apply-grad {
    width: 10px;
    height: 10px;
    background: linear-gradient(90deg, #444, #eee);
}
.mode-row {
    height: 18px;
    margin-top: 3px;
    padding-left: 4px;
    gap: 9px;
}
.mode-on {
    display: block;
    padding: 4px 5px;
    background: #303030;
    line-height: 0;
}

/* document column */
.doc {
    flex: 1;
    display: flex;
    flex-direction: column;
    min-width: 0;
}
.tabs {
    height: 16px;
    display: flex;
    background: #2e2e2e;
    font-size: 8.5px;
    line-height: 16px;
}
.tab {
    width: 226px;
    padding-left: 7px;
    background: #3b3b3b;
    color: #8a8a8a;
    white-space: nowrap;
    overflow: hidden;
    letter-spacing: .2px;
}
.tab-active {
    width: 198px;
    background: #4a4a4a;
    color: #cfcfcf;
    letter-spacing: .25px;
}
.tab-x {
    display: inline-block;
    width: 12px;
    color: #b0b0b0;
}
.hruler {
    height: 12px;
    display: flex;
    background:
        repeating-linear-gradient(90deg, #888 0 1px, transparent 1px 4.33px) 0 100% / 100% 2px no-repeat,
        #1c1c1c;
    font-size: 8px;
    line-height: 11px;
    color: #a8a8a8;
}
.ruler-corner {
    flex: none;
    width: 14px;
    background: #3c3c3c;
    border-right: 1px solid #666;
    border-bottom: 1px solid #666;
}
.hruler span {
    flex: none;
    width: 43.3px;
    padding-left: 2px;
    border-left: 1px solid #8a8a8a;
}
.hruler span.t-lead {
    width: 22px;
    border-left: 0;
}
.hruler span.short {
    width: 34px;
}
.view {
    height: 593px;
    display: flex;
}
.vruler {
    flex: none;
    width: 14px;
    height: 581px;
    padding-top: 21px;
    display: flex;
    flex-direction: column;
    overflow: hidden;
    background:
        repeating-linear-gradient(#999 0 1px, transparent 1px 3.9px) 100% 0 / 2px 100% no-repeat,
        #1c1c1c;
    font-size: 7.5px;
    line-height: 6.5px;
    color: #a8a8a8;
}
.vruler span {
    flex: none;
    height: 39px;
    padding: 2px 5px 0 3px;
    border-top: 1px solid #8a8a8a;
    word-break: break-all;
}
.canvas {
    flex: 1;
    padding-top: 11px;
    background: #4a4a4a;
    min-width: 0;
}
.page {
    height: 570px;
    background: #fff;
    border-bottom: 1px solid #1e1e1e;
}
.spread {
    display: block;
}
.vscroll {
    flex: none;
    width: 15px;
    display: flex;
    flex-direction: column;
    background: #3a3a3a;
    border-right: 1px solid #2a2a2a;
}
.arrow-up, .arrow-down {
    width: 0;
    height: 0;
    margin: 0 auto;
    border: 4px solid transparent;
    border-top: 0;
    border-bottom: 5px solid #ddd;
}
.arrow-up {
    margin-top: -9px;
    margin-bottom: 15px;
}
.arrow-down {
    margin-top: 23px;
    border-bottom: 0;
    border-top: 5px solid #ddd;
}
.vthumb {
    height: 551px;
    width: 13px;
    background: #9a9a9a;
}

/* status bar */
.statusbar {
    height: 13px;
    flex: none;
    display: flex;
    background: #3a3a3a;
    font-size: 8px;
    line-height: 13px;
}
.status-left {
    flex: none;
    width: 268px;
    display: flex;
    align-items: center;
    padding-left: 18px;
    background: #4a4a4a;
    color: #a8a8a8;
}
.nav {
    flex: none;
    width: 5px;
    height: 7px;
    background: #777;
}
.nav-first, .nav-last { width: 6px; }
.nav-prev { margin-left: 8px; clip-path: polygon(100% 0, 0 50%, 100% 100%); }
.nav-first { clip-path: polygon(0 0, 20% 0, 20% 40%, 100% 0, 100% 100%, 20% 60%, 20% 100%, 0 100%); }
.nav-next { margin-left: 10px; clip-path: polygon(0 0, 100% 50%, 0 100%); }
.nav-last { margin-left: 6px; clip-path: polygon(0 0, 80% 40%, 80% 0, 100% 0, 100% 100%, 80% 100%, 80% 60%, 0 100%); }
.status-page {
    flex: none;
    margin-left: 9px;
    width: 74px;
    white-space: nowrap;
}
.status-left .caret {
    flex: none;
    margin-left: 0;
    border-top-color: #ddd;
}
.status-doc {
    margin-left: 8px;
    flex: none;
}
.status-dot {
    margin-left: 10px;
    width: 10px;
    height: 10px;
    flex: none;
    border-radius: 50%;
    background: radial-gradient(circle at 50% 40%, #50e850, #20a820);
}
.status-err {
    flex: none;
    margin-left: 3px;
    width: 62px;
    white-space: nowrap;
}
.status-left .caret-small {
    margin-left: 0;
    border-width: 2px 3px 0;
}
.hscroll {
    flex: 1;
    display: flex;
    align-items: center;
    padding-left: 4px;
    background: #333;
}
.arrow-left, .arrow-right {
    width: 0;
    height: 0;
    border: 4px solid transparent;
    flex: none;
}
.arrow-left {
    border-right: 5px solid #ddd;
    border-left: 0;
}
.arrow-right {
    margin-left: 107px;
    border-left: 5px solid #ddd;
    border-right: 0;
}
.hthumb {
    flex: none;
    width: 511px;
    height: 11px;
    margin-left: 141px;
    background: #9a9a9a;
}
.spread-icon {
    margin-left: 9px;
    flex: none;
}
.scroll-corner {
    flex: none;
    align-self: stretch;
    width: 15px;
    margin-left: auto;
    background: #4a4a4a;
}

/* right panels */
.panels-col {
    width: 147px;
    flex: none;
    display: flex;
    flex-direction: column;
}
.panels {
    flex: 1;
    background: #484848;
    border-left: 1px solid #3a3a3a;
}
.panel {
    padding: 3px 0 2.5px;
    border-bottom: 1px solid #333;
    box-shadow: 0 1px 0 #555;
}
.panel-first {
    padding: 5px 0 1.5px;
}
.panel-second {
    padding-bottom: 2px;
}
.panel .grip-h {
    margin-bottom: 2px;
}
.panel-item {
    height: 22.5px;
    display: flex;
    align-items: center;
    gap: 7px;
    padding-left: 9px;
    font-size: 9px;
    color: #d8d8d8;
    white-space: nowrap;
}
.panel-item svg {
    flex: none;
    color: #c0c0c0;
}
.panel-fx {
    width: 16px;
    font-family: "Liberation Serif", serif;
    font-style: italic;
    font-size: 17px;
    color: #bbb;
}
.panel-a {
    position: relative;
    width: 16px;
    height: 16px;
}
.panel-a b {
    position: absolute;
    right: -2px;
    top: -3px;
    font-size: 13px;
    font-weight: normal;
}
.desktop-edge {
    height: 3px;
}

/* Ränder und Spalten dialog */
.dialog {
    position: absolute;
    left: 348px;
    top: 266px;
    width: 583px;
    height: 188px;
    background: #474747;
    box-shadow: 0 6px 28px rgba(0, 0, 0, .55);
}
.dialog-title {
    height: 18px;
    background: linear-gradient(#e2e2e2, #a6a6a6);
    color: #1c1c1c;
    font-size: 9.5px;
    font-weight: bold;
    line-height: 19px;
    text-align: center;
    letter-spacing: .2px;
}
.dialog-body {
    display: flex;
    padding: 14px 14px 0 15px;
    font-size: 10.2px;
}
.dialog-main {
    width: 455px;
}
.dlg-group {
    display: flex;
    margin: 0 0 9px;
    padding: 8px 0 11px 0;
    border: 1px solid #363636;
    height: 65px;
}
.dlg-group-cols {
    height: 41px;
    padding-bottom: 0;
    padding-top: 6px;
    margin-bottom: 11px;
}
.dlg-group legend {
    margin-left: 7px;
    padding: 0 3px;
    line-height: 12px;
    color: #b8b8b8;
}
.dlg-col {
    position: relative;
    display: flex;
    flex-direction: column;
    gap: 7px;
}
.dlg-field {
    display: flex;
    align-items: center;
    height: 13px;
}
.dlg-field label {
    flex: none;
    width: 67px;
    text-align: right;
    color: #bdbdbd;
    white-space: nowrap;
}
.spin-big {
    width: 12px;
    height: 13px;
    margin-left: 6px;
}
.spin-big::before { left: 3px; top: 1px; }
.spin-big::after { left: 3px; bottom: 1px; }
.dlg-input {
    flex: none;
    width: 52px;
    height: 13px;
    margin-left: 2px;
    padding-left: 2px;
    background: #9b9b9b;
    color: #222;
    line-height: 13px;
    font-size: 10px;
}
.dlg-input.wide {
    width: 63px;
}
.focused {
    outline: 1px solid #c2762a;
}
.focused em {
    font-style: normal;
    background: #b4d4fb;
    color: #123;
}
.dlg-chain {
    position: absolute;
    left: 147px;
    top: 7px;
    color: #ddd;
}
.dlg-right {
    margin-left: auto;
    padding-right: 28px;
}
.dlg-right .dlg-field label {
    width: 60px;
}
.dlg-right-wide {
    padding-right: 16px;
}
.dlg-right-wide .dlg-field label {
    width: 83px;
}
.dlg-check, .dlg-preview {
    display: flex;
    align-items: center;
    gap: 4px;
    color: #b4b4b4;
    white-space: nowrap;
}
.dialog-side {
    margin-left: 15px;
    width: 84px;
    display: flex;
    flex-direction: column;
    align-items: flex-start;
}
.btn {
    width: 81px;
    height: 16px;
    margin: 0 0 8px 2px;
    padding: 0;
    border: 1px solid #3a3a3a;
    background: linear-gradient(#6a6a6a, #575757);
    color: #bcbcbc;
    font-family: inherit;
    font-size: 10.2px;
    line-height: 13px;
}
.btn-default {
    width: 84px;
    margin-left: 0;
    margin-top: -2px;
    border: 1px solid #262626;
    color: #999;
}
.dlg-preview {
    margin: 3px 0 0 2px;
    gap: 3px;
}
.check-box.checked {
    font-size: 10px;
    line-height: 8px;
    color: #ddd;
    text-align: center;
}

.cursor {
    position: absolute;
    left: 756px;
    top: 358px;
}
```
